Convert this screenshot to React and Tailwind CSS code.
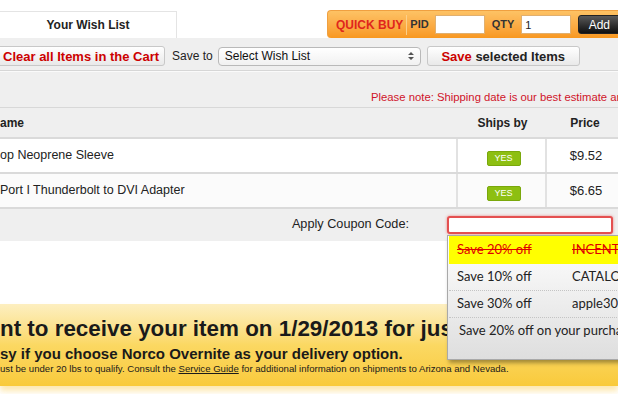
import React from "react";

const font = { fontFamily: '"Liberation Sans", Arial, sans-serif' };

const YesBadge = () => (
    <span className="inline-flex items-center justify-center w-[34px] h-[15px] rounded-[2px] bg-[#8dbf12] border border-[#7aa80c] text-white text-[9px] leading-none">
        YES
    </span>
);

const products = [
    { name: "op Neoprene Sleeve", price: "$9.52", bg: "bg-white" },
    { name: "Port I Thunderbolt to DVI Adapter", price: "$6.65", bg: "bg-[#fbfbfb]" },
];

const coupons = [
    { label: "Save 20% off", code: "INCENTIVE", used: true },
    { label: "Save 10% off", code: "CATALOG" },
    { label: "Save 30% off", code: "apple30" },
];

const App = () => {
    return (
        <div className="relative w-[618px] h-[394px] overflow-hidden bg-white text-[#222]" style={font}>
            {/* top strip: tab + quick buy */}
            <div className="flex h-[38px]">
                <div className="mt-[11px] w-[177px] h-[27px] shrink-0 border-t border-r border-[#e4e4e4] flex items-center justify-center text-[12px] font-bold">
                    Your Wish List
                </div>
                <div className="ml-[150px] mt-[10px] h-[28px] flex-1 flex items-center whitespace-nowrap rounded-l-[4px] bg-gradient-to-b from-[#fdc264] to-[#f8981f] border-t border-l border-[#f0a040]">
                    <span className="ml-[8px] text-[12px] font-bold text-[#e0261c]">QUICK BUY</span>
                    <span className="ml-[3px] w-px h-[20px] bg-[#fbd08a]"></span>
                    <span className="ml-[3px] text-[11px] font-bold text-[#333]">PID</span>
                    <input className="ml-[6px] w-[50px] h-[19px] bg-white border border-[#e0b070] outline-none" />
                    <span className="ml-[7px] text-[11px] font-bold text-[#333]">QTY</span>
                    <input defaultValue="1" className="ml-[7px] w-[50px] h-[19px] bg-white border border-[#e0b070] px-[3px] text-[11px] outline-none" />
                    <button className="ml-[7px] w-[50px] h-[19px] shrink-0 rounded-[3px] bg-gradient-to-b from-[#5a5a5a] to-[#111] border border-[#222] text-white text-[12px] pr-[8px]">
                        Add
                    </button>
                </div>
            </div>

            {/* gray area */}
            <div className="bg-[#efefef]">
                {/* toolbar */}
                <div className="flex items-center pt-[8px] pb-[4px] border-b border-[#d6d6d6] shadow-[0_1px_0_#fafafa] whitespace-nowrap">
                    <button className="-ml-[8px] w-[173px] h-[20px] shrink-0 pl-[10px] text-left rounded-[3px] border border-[#c8c8c8] bg-gradient-to-b from-white to-[#e9e9e9] text-[13px] font-bold text-[#cc0000]">
                        Clear all Items in the Cart
                    </button>
                    <span className="ml-[7px] text-[12px] text-[#222]">Save to</span>
                    <div className="ml-[5px] w-[203px] h-[19px] shrink-0 flex items-center justify-between rounded-[4px] border border-[#b9b9b9] bg-gradient-to-b from-white to-[#f1f1f1] pl-[6px] pr-[6px]">
                        <span className="text-[12px] text-[#111]">Select Wish List</span>
                        <svg width="6" height="10" viewBox="0 0 6 10">
                            <path d="M0 4 L3 1 L6 4 Z M0 6 L3 9 L6 6 Z" fill="#555" />
                        </svg>
                    </div>
                    <button className="ml-[6px] w-[153px] h-[20px] shrink-0 rounded-[3px] border border-[#c8c8c8] bg-gradient-to-b from-white to-[#e9e9e9] text-[13px] font-bold text-[#222]">
                        <span className="text-[#cc0000]">Save</span> selected Items
                    </button>
                </div>

                {/* note */}
                <div className="pl-[371px] pt-[20px] pb-[3px] h-[36px] whitespace-nowrap text-[11.3px] leading-[13px] text-[#d0142a]">
                    Please note: Shipping date is our best estimate and may vary
                </div>

                {/* table */}
                <div className="border-t border-[#d8d8d8]">
                    <div className="flex h-[31px] items-center border-b-2 border-[#dadada] text-[12px] font-bold text-[#222]">
                        <div className="w-[456px] shrink-0">ame</div>
                        <div className="w-[89px] shrink-0 text-center pl-[4px]">Ships by</div>
                        <div className="w-[80px] shrink-0 text-center">Price</div>
                    </div>
                    {products.map((p) => (
                        <div key={p.price} className={`flex h-[35px] border-b-2 border-[#dadada] ${p.bg}`}>
                            <div className="w-[456px] shrink-0 flex items-center text-[12.5px] text-[#222] whitespace-nowrap">{p.name}</div>
                            <div className="w-[89px] shrink-0 flex items-center justify-center border-l-2 border-[#e2e2e2]">
                                <span className="ml-[4px]"><YesBadge /></span>
                            </div>
                            <div className="w-[80px] shrink-0 flex items-center justify-center border-l-2 border-[#e2e2e2] text-[13px] text-[#222]">
                                {p.price}
                            </div>
                        </div>
                    ))}
                </div>

                {/* coupon */}
                <div className="flex items-center h-[32px]">
                    <div className="w-[409px] shrink-0 text-right text-[12.7px] text-[#222]">Apply Coupon Code:</div>
                    <input className="ml-[38px] w-[166px] h-[18px] shrink-0 rounded-[3px] border-2 border-[#e45050] bg-white shadow-[0_0_3px_rgba(230,60,60,0.6)] outline-none" />
                </div>
            </div>

            {/* spacer */}
            <div className="h-[63px]"></div>

            {/* delivery banner */}
            <div className="h-[82px] pt-[13px] whitespace-nowrap bg-gradient-to-b from-[#fdefc0] via-[#fbd862] to-[#f9ca3a] shadow-[0_5px_6px_rgba(250,205,80,0.45)] text-[#1a1a1a]">
                <div className="text-[22.4px] leading-[24px] font-bold">nt to receive your item on 1/29/2013 for just $19.99</div>
                <div className="mt-[4px] text-[15px] leading-[18px] font-bold">sy if you choose Norco Overnite as your delivery option.</div>
                <div className="text-[9.6px] leading-[11px]">
                    ust be under 20 lbs to qualify. Consult the <span className="underline">Service Guide</span> for additional information on shipments to Arizona and Nevada.
                </div>
            </div>

            {/* coupon dropdown */}
            <div
                className="absolute left-[447px] top-[235px] w-[190px] h-[125px] border border-[#a9a9a9] bg-gradient-to-b from-white to-[#dedede] shadow-[2px_3px_4px_rgba(0,0,0,0.35)] whitespace-nowrap text-[13px] text-[#222]"
                style={{ fontFamily: 'Lato, "Open Sans", sans-serif' }}
            >
                {coupons.map((c) => (
                    <div
                        key={c.label + c.code}
                        className={`flex items-center mx-[1px] ${c.used ? "h-[28px] bg-[#ffff00] text-[#e00000] line-through" : "h-[27px] border-b border-dotted border-[#c4c4c4]"}`}
                    >
                        <span className="w-[123px] shrink-0 pl-[8px]">{c.label}</span>
                        <span>{c.code}</span>
                    </div>
                ))}
                <div className="pl-[11px] pt-[3px]">Save 20% off on your purchase</div>
            </div>
        </div>
    );
};

export default App;
